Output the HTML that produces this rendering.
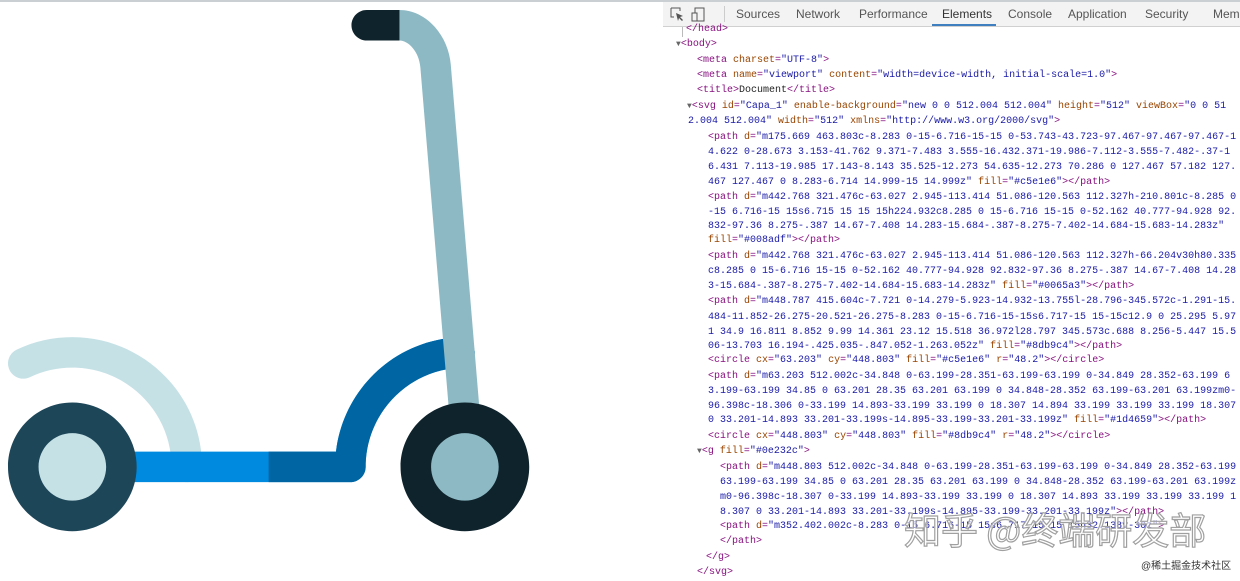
<!DOCTYPE html>
<html><head><meta charset="UTF-8"><style>
html,body{margin:0;padding:0;width:1240px;height:581px;overflow:hidden;background:#fff;position:relative}
.topline{position:absolute;left:0;top:0;width:1240px;height:2px;background:#c9cfd2}
.bar{position:absolute;left:663px;top:2px;width:577px;height:24px;background:#f3f3f3;border-bottom:1px solid #d0d0d0}
.tab{position:absolute;top:7px;font:12px "Liberation Sans",sans-serif;color:#555;white-space:nowrap}
.ul{position:absolute;left:932px;top:24px;width:64px;height:2px;background:#3f7fc0}
.code{position:absolute;left:0;top:0;font:10px/15.2px "Liberation Mono",monospace;color:#222;white-space:pre}
.l{position:absolute;white-space:pre}
.t{color:#881280}.a{color:#994500}.v{color:#1a1aa6}
.tri{color:#666;font-size:8px}
.wm{position:absolute;left:904px;top:510px;font:37px/1 "Noto Sans CJK SC",sans-serif;color:rgba(255,255,255,.55);-webkit-text-stroke:1.2px #a0a0a0;white-space:nowrap}
.wm2{position:absolute;left:1141px;top:557px;font:10px "Liberation Sans","Noto Sans CJK SC",sans-serif;color:#333;white-space:nowrap}
</style></head><body>
<div class="topline"></div>
<svg style="position:absolute;left:0;top:0" width="660" height="581">
<g transform="translate(8,10) scale(1.018)">
<path d="m175.669 463.803c-8.283 0-15-6.716-15-15 0-53.743-43.723-97.467-97.467-97.467-14.622 0-28.673 3.153-41.762 9.371-7.483 3.555-16.432.371-19.986-7.112-3.555-7.482-.37-16.431 7.113-19.985 17.143-8.143 35.525-12.273 54.635-12.273 70.286 0 127.467 57.182 127.467 127.467 0 8.283-6.714 14.999-15 14.999z" fill="#c5e1e6"/>
<path d="m442.768 321.476c-63.027 2.945-113.414 51.086-120.563 112.327h-210.801c-8.285 0-15 6.716-15 15s6.715 15 15 15h224.932c8.285 0 15-6.716 15-15 0-52.162 40.777-94.928 92.832-97.36 8.275-.387 14.67-7.408 14.283-15.684-.387-8.275-7.402-14.684-15.683-14.283z" fill="#008adf"/>
<path d="m442.768 321.476c-63.027 2.945-113.414 51.086-120.563 112.327h-66.204v30h80.335c8.285 0 15-6.716 15-15 0-52.162 40.777-94.928 92.832-97.360 8.275-.387 14.67-7.408 14.283-15.684-.387-8.275-7.402-14.684-15.683-14.283z" fill="#0065a3"/>
<path d="m448.787 415.604c-7.721 0-14.279-5.923-14.932-13.755l-28.796-345.572c-1.291-15.484-11.852-26.275-20.521-26.275-8.283 0-15-6.716-15-15s6.717-15 15-15c12.9 0 25.295 5.971 34.9 16.811 8.852 9.99 14.361 23.12 15.518 36.972l28.797 345.573c.688 8.256-5.447 15.506-13.703 16.194-.425.035-.847.052-1.263.052z" fill="#8db9c4"/>
<circle cx="63.203" cy="448.803" r="48.2" fill="#c5e1e6"/>
<path d="m63.203 512.002c-34.848 0-63.199-28.351-63.199-63.199 0-34.849 28.352-63.199 63.199-63.199 34.85 0 63.201 28.35 63.201 63.199 0 34.848-28.352 63.199-63.201 63.199zm0-96.398c-18.306 0-33.199 14.893-33.199 33.199 0 18.307 14.894 33.199 33.199 33.199 18.307 0 33.201-14.893 33.201-33.199s-14.895-33.199-33.201-33.199z" fill="#1d4659"/>
<circle cx="448.803" cy="448.803" r="48.2" fill="#8db9c4"/>
<g fill="#0e232c">
<path d="m448.803 512.002c-34.848 0-63.199-28.351-63.199-63.199 0-34.849 28.352-63.199 63.199-63.199 34.85 0 63.201 28.35 63.201 63.199 0 34.848-28.352 63.199-63.201 63.199zm0-96.398c-18.307 0-33.199 14.893-33.199 33.199 0 18.307 14.893 33.199 33.199 33.199 18.307 0 33.201-14.893 33.201-33.199s-14.895-33.199-33.201-33.199z"/>
<path d="m352.402.002c-8.283 0-15 6.716-15 15s6.717 15 15 15h32.138v-30z"/>
</g>
</g>
</svg>
<div class="bar"></div>
<svg style="position:absolute;left:670px;top:7px" width="40" height="16">
<path d="M1 1h9v3M1 1v9h3" fill="none" stroke="#555" stroke-width="1"/>
<path d="M6 6l7 3-3 1 3 3-1 1-3-3-1 3z" fill="#555"/>
<rect x="25" y="1" width="9" height="13" fill="none" stroke="#555"/>
<rect x="22" y="6" width="5" height="8" fill="#f3f3f3" stroke="#555"/>
</svg>
<div style="position:absolute;left:724px;top:6px;width:1px;height:16px;background:#ccc"></div>
<div class="tab" style="left:736px">Sources</div>
<div class="tab" style="left:796px">Network</div>
<div class="tab" style="left:859px">Performance</div>
<div class="tab" style="left:942px;color:#333">Elements</div>
<div class="tab" style="left:1008px">Console</div>
<div class="tab" style="left:1068px">Application</div>
<div class="tab" style="left:1145px">Security</div>
<div class="tab" style="left:1213px">Mem</div>
<div class="ul"></div>
<div style="position:absolute;left:682px;top:27px;width:1px;height:10px;background:#bbb"></div>
<div class="code">
<div class="l" style="left:686px;top:22px"><span class="t">&lt;/head&gt;</span></div>
<div class="l" style="left:676px;top:37px"><span class="tri">▼</span><span class="t">&lt;body&gt;</span></div>
<div class="l" style="left:697px;top:53px"><span class="t">&lt;meta </span><span class="a">charset</span><span class="t">=</span><span class="v">"UTF-8"</span><span class="t">&gt;</span></div>
<div class="l" style="left:697px;top:68px"><span class="t">&lt;meta </span><span class="a">name</span><span class="t">=</span><span class="v">"viewport"</span> <span class="a">content</span><span class="t">=</span><span class="v">"width=device-width, initial-scale=1.0"</span><span class="t">&gt;</span></div>
<div class="l" style="left:697px;top:83px"><span class="t">&lt;title&gt;</span>Document<span class="t">&lt;/title&gt;</span></div>
<div class="l" style="left:687px;top:99px"><span class="tri">▼</span><span class="t">&lt;svg </span><span class="a">id</span><span class="t">=</span><span class="v">"Capa_1"</span> <span class="a">enable-background</span><span class="t">=</span><span class="v">"new 0 0 512.004 512.004"</span> <span class="a">height</span><span class="t">=</span><span class="v">"512"</span> <span class="a">viewBox</span><span class="t">=</span><span class="v">"0 0 51</span></div>
<div class="l" style="left:688px;top:114px"><span class="v">2.004 512.004"</span> <span class="a">width</span><span class="t">=</span><span class="v">"512"</span> <span class="a">xmlns</span><span class="t">=</span><span class="v">"http://www.w3.org/2000/svg"</span><span class="t">&gt;</span></div>
<div class="l" style="left:708px;top:130px"><span class="t">&lt;path </span><span class="a">d</span><span class="t">=</span><span class="v">"m175.669 463.803c-8.283 0-15-6.716-15-15 0-53.743-43.723-97.467-97.467-97.467-1</span></div>
<div class="l" style="left:708px;top:145px"><span class="v">4.622 0-28.673 3.153-41.762 9.371-7.483 3.555-16.432.371-19.986-7.112-3.555-7.482-.37-1</span></div>
<div class="l" style="left:708px;top:160px"><span class="v">6.431 7.113-19.985 17.143-8.143 35.525-12.273 54.635-12.273 70.286 0 127.467 57.182 127.</span></div>
<div class="l" style="left:708px;top:175px"><span class="v">467 127.467 0 8.283-6.714 14.999-15 14.999z"</span> <span class="a">fill</span><span class="t">=</span><span class="v">"#c5e1e6"</span><span class="t">&gt;&lt;/path&gt;</span></div>
<div class="l" style="left:708px;top:190px"><span class="t">&lt;path </span><span class="a">d</span><span class="t">=</span><span class="v">"m442.768 321.476c-63.027 2.945-113.414 51.086-120.563 112.327h-210.801c-8.285 0</span></div>
<div class="l" style="left:708px;top:205px"><span class="v">-15 6.716-15 15s6.715 15 15 15h224.932c8.285 0 15-6.716 15-15 0-52.162 40.777-94.928 92.</span></div>
<div class="l" style="left:708px;top:219px"><span class="v">832-97.36 8.275-.387 14.67-7.408 14.283-15.684-.387-8.275-7.402-14.684-15.683-14.283z"</span></div>
<div class="l" style="left:708px;top:233px"><span class="a">fill</span><span class="t">=</span><span class="v">"#008adf"</span><span class="t">&gt;&lt;/path&gt;</span></div>
<div class="l" style="left:708px;top:249px"><span class="t">&lt;path </span><span class="a">d</span><span class="t">=</span><span class="v">"m442.768 321.476c-63.027 2.945-113.414 51.086-120.563 112.327h-66.204v30h80.335</span></div>
<div class="l" style="left:708px;top:264px"><span class="v">c8.285 0 15-6.716 15-15 0-52.162 40.777-94.928 92.832-97.36 8.275-.387 14.67-7.408 14.28</span></div>
<div class="l" style="left:708px;top:279px"><span class="v">3-15.684-.387-8.275-7.402-14.684-15.683-14.283z"</span> <span class="a">fill</span><span class="t">=</span><span class="v">"#0065a3"</span><span class="t">&gt;&lt;/path&gt;</span></div>
<div class="l" style="left:708px;top:294px"><span class="t">&lt;path </span><span class="a">d</span><span class="t">=</span><span class="v">"m448.787 415.604c-7.721 0-14.279-5.923-14.932-13.755l-28.796-345.572c-1.291-15.</span></div>
<div class="l" style="left:708px;top:310px"><span class="v">484-11.852-26.275-20.521-26.275-8.283 0-15-6.716-15-15s6.717-15 15-15c12.9 0 25.295 5.97</span></div>
<div class="l" style="left:708px;top:325px"><span class="v">1 34.9 16.811 8.852 9.99 14.361 23.12 15.518 36.972l28.797 345.573c.688 8.256-5.447 15.5</span></div>
<div class="l" style="left:708px;top:339px"><span class="v">06-13.703 16.194-.425.035-.847.052-1.263.052z"</span> <span class="a">fill</span><span class="t">=</span><span class="v">"#8db9c4"</span><span class="t">&gt;&lt;/path&gt;</span></div>
<div class="l" style="left:708px;top:353px"><span class="t">&lt;circle </span><span class="a">cx</span><span class="t">=</span><span class="v">"63.203"</span> <span class="a">cy</span><span class="t">=</span><span class="v">"448.803"</span> <span class="a">fill</span><span class="t">=</span><span class="v">"#c5e1e6"</span> <span class="a">r</span><span class="t">=</span><span class="v">"48.2"</span><span class="t">&gt;&lt;/circle&gt;</span></div>
<div class="l" style="left:708px;top:369px"><span class="t">&lt;path </span><span class="a">d</span><span class="t">=</span><span class="v">"m63.203 512.002c-34.848 0-63.199-28.351-63.199-63.199 0-34.849 28.352-63.199 6</span></div>
<div class="l" style="left:708px;top:384px"><span class="v">3.199-63.199 34.85 0 63.201 28.35 63.201 63.199 0 34.848-28.352 63.199-63.201 63.199zm0-</span></div>
<div class="l" style="left:708px;top:399px"><span class="v">96.398c-18.306 0-33.199 14.893-33.199 33.199 0 18.307 14.894 33.199 33.199 33.199 18.307</span></div>
<div class="l" style="left:708px;top:413px"><span class="v">0 33.201-14.893 33.201-33.199s-14.895-33.199-33.201-33.199z"</span> <span class="a">fill</span><span class="t">=</span><span class="v">"#1d4659"</span><span class="t">&gt;&lt;/path&gt;</span></div>
<div class="l" style="left:708px;top:429px"><span class="t">&lt;circle </span><span class="a">cx</span><span class="t">=</span><span class="v">"448.803"</span> <span class="a">cy</span><span class="t">=</span><span class="v">"448.803"</span> <span class="a">fill</span><span class="t">=</span><span class="v">"#8db9c4"</span> <span class="a">r</span><span class="t">=</span><span class="v">"48.2"</span><span class="t">&gt;&lt;/circle&gt;</span></div>
<div class="l" style="left:697px;top:444px"><span class="tri">▼</span><span class="t">&lt;g </span><span class="a">fill</span><span class="t">=</span><span class="v">"#0e232c"</span><span class="t">&gt;</span></div>
<div class="l" style="left:720px;top:460px"><span class="t">&lt;path </span><span class="a">d</span><span class="t">=</span><span class="v">"m448.803 512.002c-34.848 0-63.199-28.351-63.199-63.199 0-34.849 28.352-63.199</span></div>
<div class="l" style="left:720px;top:475px"><span class="v">63.199-63.199 34.85 0 63.201 28.35 63.201 63.199 0 34.848-28.352 63.199-63.201 63.199z</span></div>
<div class="l" style="left:720px;top:490px"><span class="v">m0-96.398c-18.307 0-33.199 14.893-33.199 33.199 0 18.307 14.893 33.199 33.199 33.199 1</span></div>
<div class="l" style="left:720px;top:505px"><span class="v">8.307 0 33.201-14.893 33.201-33.199s-14.895-33.199-33.201-33.199z"</span><span class="t">&gt;&lt;/path&gt;</span></div>
<div class="l" style="left:720px;top:519px"><span class="t">&lt;path </span><span class="a">d</span><span class="t">=</span><span class="v">"m352.402.002c-8.283 0-15 6.716-15 15s6.717 15 15 15h32.138v-30z"</span><span class="t">&gt;</span></div>
<div class="l" style="left:720px;top:534px"><span class="t">&lt;/path&gt;</span></div>
<div class="l" style="left:706px;top:550px"><span class="t">&lt;/g&gt;</span></div>
<div class="l" style="left:697px;top:565px"><span class="t">&lt;/svg&gt;</span></div>
</div>
<div class="wm">知乎 @终端研发部</div>
<div class="wm2">@稀土掘金技术社区</div>
</body></html>
